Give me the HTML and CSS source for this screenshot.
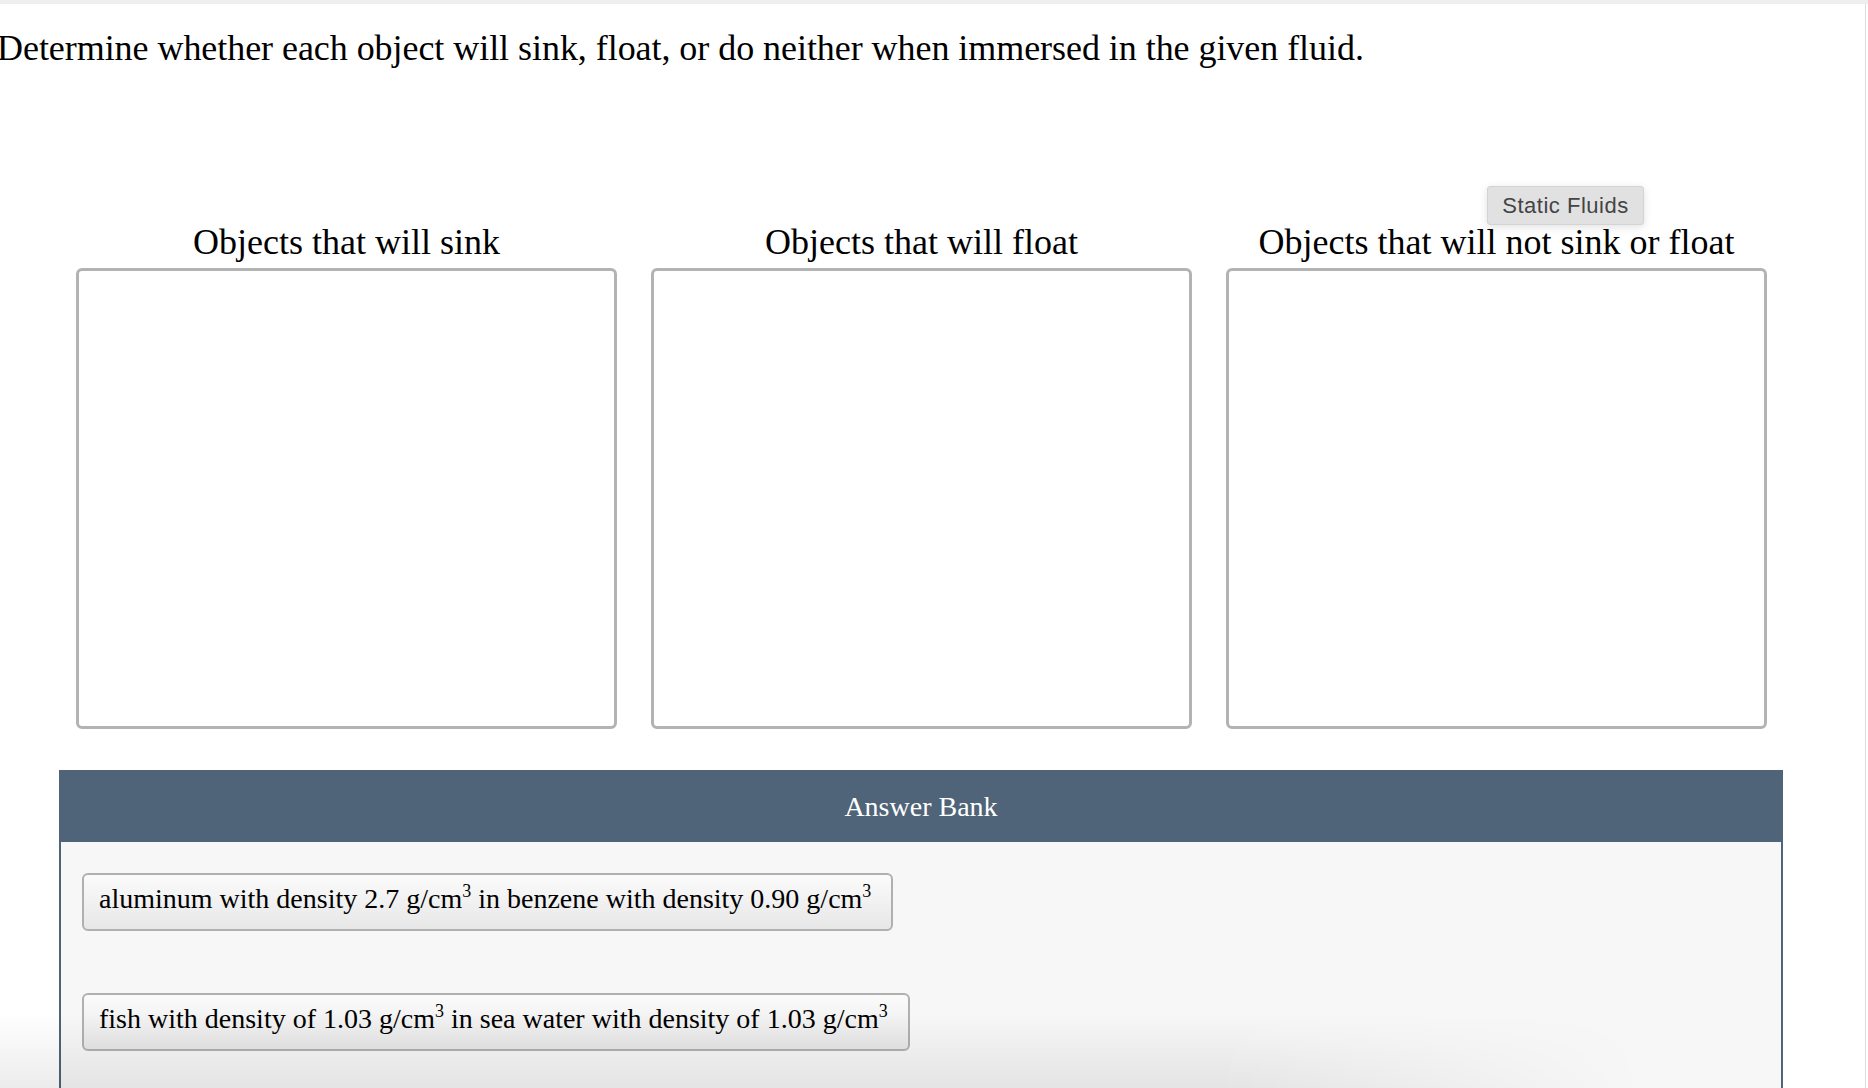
FILE: index.html
```html
<!DOCTYPE html>
<html lang="en">
<head>
<meta charset="utf-8">
<title>Static Fluids</title>
<link rel="stylesheet" href="styles.css">
</head>
<body>
<div class="page">
  <div class="sheet">
    <p class="question">Determine whether each object will sink, float, or do neither when immersed in the given fluid.</p>

    <div class="board">
      <div class="column">
        <h3 class="column-title">Objects that will sink</h3>
        <div class="dropzone"></div>
      </div>
      <div class="column">
        <h3 class="column-title">Objects that will float</h3>
        <div class="dropzone"></div>
      </div>
      <div class="column">
        <h3 class="column-title">Objects that will not sink or float</h3>
        <div class="dropzone"></div>
      </div>
      <div class="tooltip">Static Fluids</div>
    </div>

    <section class="bank">
      <h4 class="bank-title">Answer Bank</h4>
      <div class="bank-body">
        <div class="chip">aluminum with density 2.7 g/cm<sup>3</sup> in benzene with density 0.90 g/cm<sup>3</sup></div>
        <div class="chip">fish with density of 1.03 g/cm<sup>3</sup> in sea water with density of 1.03 g/cm<sup>3</sup></div>
      </div>
    </section>
  </div>
</div>
<div class="bottom-shade"></div>
</body>
</html>
```

FILE: styles.css
```css
html {
  overflow: hidden;
}

body {
  margin: 0;
  background: #ffffff;
  font-family: "Liberation Serif", "Times New Roman", serif;
  color: #000000;
}

.page {
  border-top: 4px solid #eeeeee;
  min-height: 1084px;
}

.sheet {
  width: 1866px;
  min-height: 1084px;
  border-right: 1px solid #dcdcdc;
  box-sizing: border-box;
}

.question {
  margin: 0 0 0 -3px;
  padding-top: 24px;
  font-size: 36px;
  line-height: 41px;
  letter-spacing: -0.05px;
}

.board {
  position: relative;
  margin: 153px 0 0 59px;
  width: 1724px;
  box-sizing: border-box;
  padding: 0 16px 0 17px;
  display: grid;
  grid-template-columns: repeat(3, 541px);
  column-gap: 34px;
}

.column {
  display: flex;
  flex-direction: column;
}

.column-title {
  margin: 0 0 5px 0;
  font-size: 36px;
  line-height: 41px;
  font-weight: normal;
  text-align: center;
}

.dropzone {
  height: 461px;
  box-sizing: border-box;
  border: 3px solid #b3b3b3;
  border-radius: 6px;
  background: #ffffff;
}

.tooltip {
  position: absolute;
  left: 1428px;
  top: -36px;
  width: 157px;
  height: 39px;
  box-sizing: border-box;
  background: #e1e1e1;
  border: 1px solid #d3d3d3;
  border-radius: 3px;
  box-shadow: 0 2px 8px rgba(0, 0, 0, 0.12);
  font-family: "Liberation Sans", Arial, sans-serif;
  font-size: 22px;
  letter-spacing: 0.5px;
  line-height: 37px;
  color: #444444;
  text-align: center;
}

.bank {
  margin: 41px 0 0 59px;
  width: 1724px;
}

.bank-title {
  margin: 0;
  height: 72px;
  background: #4f6479;
  color: #ffffff;
  font-size: 28px;
  line-height: 74px;
  font-weight: normal;
  text-align: center;
}

.bank-body {
  background: #f7f7f7;
  border-left: 2px solid #4f6479;
  border-right: 2px solid #4f6479;
  padding: 31px 0 62px 21px;
  display: flex;
  flex-direction: column;
  align-items: flex-start;
  gap: 62px;
}

.chip {
  height: 58px;
  box-sizing: border-box;
  padding: 8px 20px 14px 15px;
  border: 2px solid #b0b0b0;
  border-radius: 6px;
  background: linear-gradient(to bottom, #fbfbfb, #e7e7e7);
  font-size: 28px;
  line-height: 32px;
  white-space: nowrap;
}

.chip sup {
  font-size: 18px;
  line-height: 0;
  vertical-align: 11px;
}

.bottom-shade {
  position: fixed;
  left: 0;
  right: 0;
  bottom: 0;
  height: 75px;
  pointer-events: none;
  background: linear-gradient(to bottom, rgba(0, 0, 0, 0), rgba(0, 0, 0, 0.075));
  -webkit-mask-image: linear-gradient(to right, #000 0%, #000 65%, transparent 88%);
  mask-image: linear-gradient(to right, #000 0%, #000 65%, transparent 88%);
}
```
